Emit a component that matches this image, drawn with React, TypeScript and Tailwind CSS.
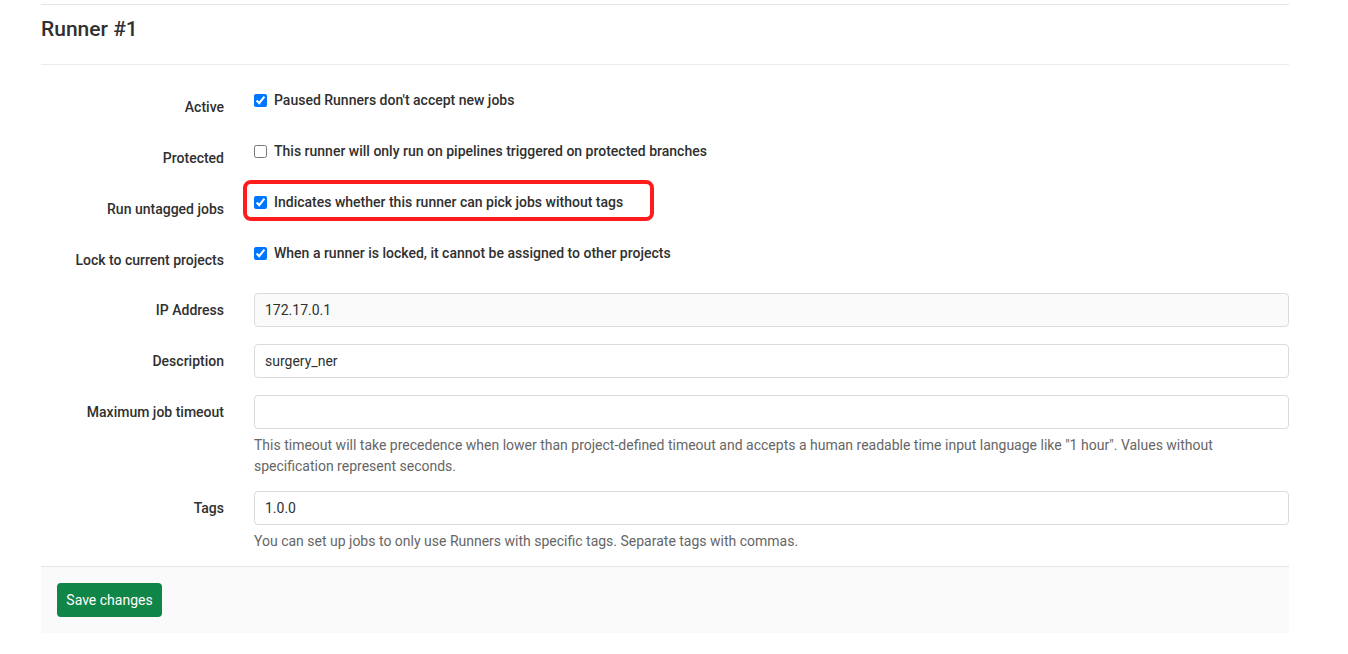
import React, { useState } from 'react';

const labelCls = 'w-[183px] shrink-0 text-right text-sm font-medium text-[#303030] pt-[7px] leading-5';

const CheckRow: React.FC<{ label: string; text: string; checked: boolean; highlight?: boolean }> = ({
  label,
  text,
  checked,
  highlight,
}) => {
  const [on, setOn] = useState(checked);
  return (
    <div className="flex gap-[30px] h-[34px]">
      <div className={labelCls}>{label}</div>
      <div className="relative">
        <label className="flex items-center gap-[7px] text-sm font-medium text-[#303030] leading-5">
          <input
            type="checkbox"
            checked={on}
            onChange={() => setOn(!on)}
            className="w-[13px] h-[13px] m-0 accent-[#0075ff]"
          />
          {text}
        </label>
        {highlight && (
          <div className="absolute left-[-11px] top-[-12px] w-[411px] h-[41px] border-[4px] border-[#ff1c1c] rounded-[8px] pointer-events-none" />
        )}
      </div>
    </div>
  );
};

const InputRow: React.FC<{ label: string; value: string; readOnly?: boolean; help?: string }> = ({
  label,
  value,
  readOnly,
  help,
}) => (
  <div className={`flex gap-[30px] ${help ? 'mb-[14px]' : 'mb-[17px]'}`}>
    <div className={labelCls}>{label}</div>
    <div className="flex-1">
      <input
        type="text"
        defaultValue={value}
        readOnly={readOnly}
        className={`w-full h-[34px] px-[10px] text-sm text-[#303030] border border-[#dbdbdb] rounded-[4px] outline-none ${
          readOnly ? 'bg-[#fafafa]' : 'bg-white'
        }`}
      />
      {help && <p className="mt-[6px] text-sm leading-[21px] text-[#666666]">{help}</p>}
    </div>
  </div>
);

export default function App() {
  return (
    <div className="min-h-screen bg-white" style={{ fontFamily: 'Roboto, "Noto Sans", sans-serif' }}>
      <div className="ml-[41px] w-[1248px] pt-[4px]">
        <div className="border-t border-[#e5e5e5]">
          <h3 className="h-[60px] pt-[12px] leading-6 text-[21px] font-medium text-[#303030] border-b border-[#ebebeb]">
            Runner #1
          </h3>
        </div>
        <div className="pt-[25px]">
          <div className="flex flex-col gap-[17px] mb-[16px]">
            <CheckRow label="Active" text="Paused Runners don't accept new jobs" checked />
            <CheckRow
              label="Protected"
              text="This runner will only run on pipelines triggered on protected branches"
              checked={false}
            />
            <CheckRow
              label="Run untagged jobs"
              text="Indicates whether this runner can pick jobs without tags"
              checked
              highlight
            />
            <CheckRow
              label="Lock to current projects"
              text="When a runner is locked, it cannot be assigned to other projects"
              checked
            />
          </div>
          <InputRow label="IP Address" value="172.17.0.1" readOnly />
          <InputRow label="Description" value="surgery_ner" />
          <InputRow
            label="Maximum job timeout"
            value=""
            help={'This timeout will take precedence when lower than project-defined timeout and accepts a human readable time input language like "1 hour". Values without specification represent seconds.'}
          />
          <InputRow
            label="Tags"
            value="1.0.0"
            help="You can set up jobs to only use Runners with specific tags. Separate tags with commas."
          />
        </div>
        <div className="bg-[#fafafa] border-t border-[#e5e5e5] h-[67px] flex items-center px-[16px]">
          <button
            type="submit"
            className="h-[34px] w-[105px] bg-[#108548] text-white text-sm rounded-[4px]"
          >
            Save changes
          </button>
        </div>
      </div>
    </div>
  );
}
